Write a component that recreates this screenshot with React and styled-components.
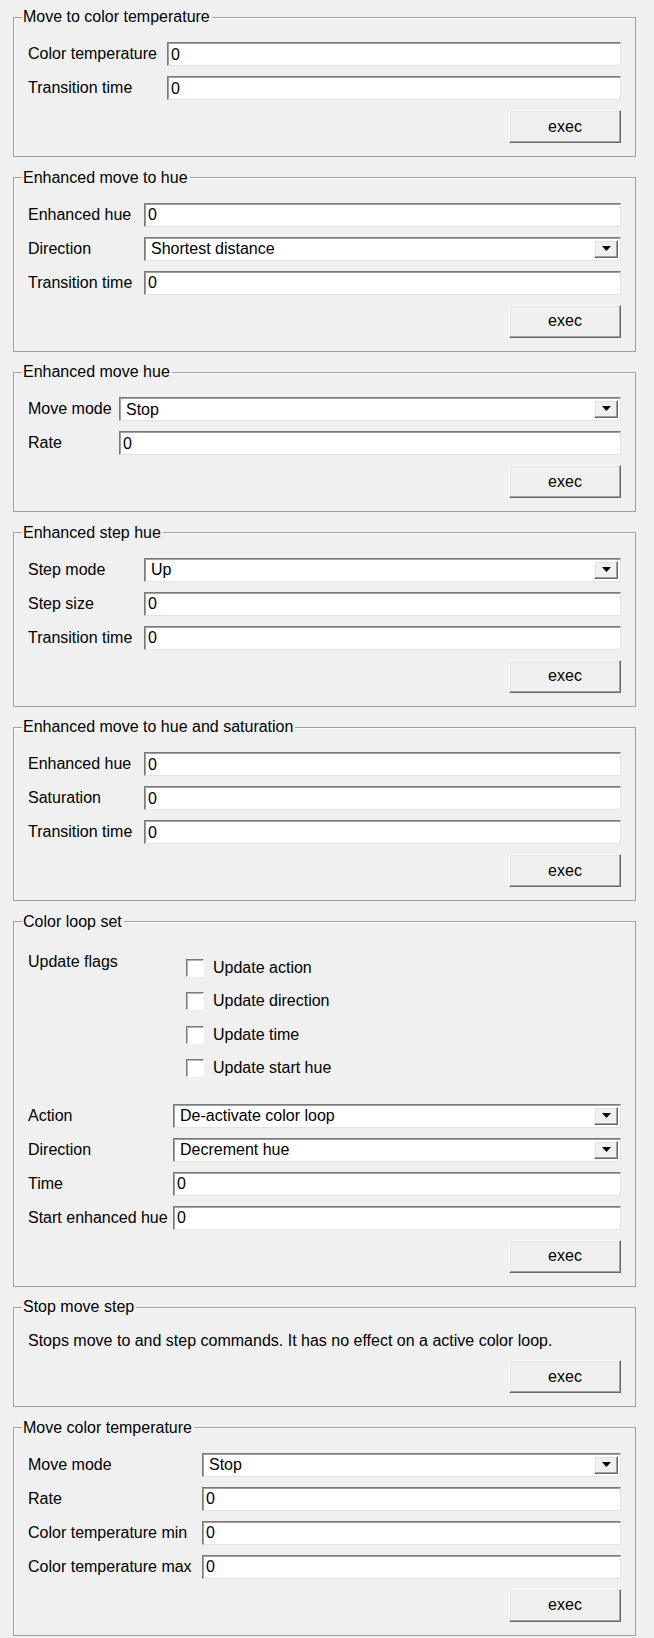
import React from 'react'
import styled, {createGlobalStyle} from 'styled-components'

const GlobalStyle = createGlobalStyle`
    html, body {
        margin: 0;
        padding: 0;
        background: #f0f0f0;
    }
    body {
        font-family: "Liberation Sans", Arial, sans-serif;
        font-size: 16px;
        color: #000;
    }
`

// labelWidth: width of the label column, so that the edit fields start where the dialog has them
const groups = [
    {
        title: 'Move to color temperature',
        labelWidth: 129,
        fields: [
            {label: 'Color temperature', value: '0'},
            {label: 'Transition time', value: '0'},
        ],
    },
    {
        title: 'Enhanced move to hue',
        labelWidth: 106,
        fields: [
            {label: 'Enhanced hue', value: '0'},
            {label: 'Direction', value: 'Shortest distance', select: true},
            {label: 'Transition time', value: '0'},
        ],
    },
    {
        title: 'Enhanced move hue',
        labelWidth: 81,
        fields: [
            {label: 'Move mode', value: 'Stop', select: true},
            {label: 'Rate', value: '0'},
        ],
    },
    {
        title: 'Enhanced step hue',
        labelWidth: 106,
        fields: [
            {label: 'Step mode', value: 'Up', select: true},
            {label: 'Step size', value: '0'},
            {label: 'Transition time', value: '0'},
        ],
    },
    {
        title: 'Enhanced move to hue and saturation',
        labelWidth: 106,
        fields: [
            {label: 'Enhanced hue', value: '0'},
            {label: 'Saturation', value: '0'},
            {label: 'Transition time', value: '0'},
        ],
    },
    {
        title: 'Color loop set',
        labelWidth: 135,
        flags: ['Update action', 'Update direction', 'Update time', 'Update start hue'],
        fields: [
            {label: 'Action', value: 'De-activate color loop', select: true},
            {label: 'Direction', value: 'Decrement hue', select: true},
            {label: 'Time', value: '0'},
            {label: 'Start enhanced hue', value: '0'},
        ],
    },
    {
        title: 'Stop move step',
        note: 'Stops move to and step commands. It has no effect on a active color loop.',
    },
    {
        title: 'Move color temperature',
        labelWidth: 164,
        fields: [
            {label: 'Move mode', value: 'Stop', select: true},
            {label: 'Rate', value: '0'},
            {label: 'Color temperature min', value: '0'},
            {label: 'Color temperature max', value: '0'},
        ],
    },
]

const Field = ({field}) => (
    <>
        <Label>{field.label}</Label>
        {field.select
            ? <Select>
                <SelectValue>{field.value}</SelectValue>
                <ArrowButton>
                    <svg width="9" height="5" viewBox="0 0 9 5">
                        <path d="M0 0h9L4.5 5z" fill="#000"/>
                    </svg>
                </ArrowButton>
            </Select>
            : <TextInput defaultValue={field.value}/>}
    </>
)

export default function App() {
    return (
        <>
            <GlobalStyle/>
            <Page>
                {groups.map(group =>
                    <Group key={group.title}>
                        <Title>{group.title}</Title>
                        {group.note && <Note>{group.note}</Note>}
                        {group.flags &&
                        <FlagsRow>
                            <FlagsLabel>Update flags</FlagsLabel>
                            <CheckList>
                                {group.flags.map(flag =>
                                    <CheckItem key={flag}>
                                        <CheckBox/>
                                        {flag}
                                    </CheckItem>
                                )}
                            </CheckList>
                        </FlagsRow>}
                        {group.fields &&
                        <FieldGrid $labelWidth={group.labelWidth}>
                            {group.fields.map(field => <Field key={field.label} field={field}/>)}
                        </FieldGrid>}
                        <ButtonRow>
                            <ExecButton>exec</ExecButton>
                        </ButtonRow>
                    </Group>
                )}
            </Page>
        </>
    )
}

const Page = styled.div`
    width: 623px;
    padding: 8px 18px 4px 13px;
    display: flex;
    flex-direction: column;
    gap: 11.5px;
`

const Group = styled.fieldset`
    margin: 0;
    min-width: 0;
    border: 1px solid #a0a0a0;
    box-shadow: inset 1px 1px 0 #fcfcfc;
    padding: 16px 14px 13px 14px;
    display: flex;
    flex-direction: column;
    gap: 10px;
`

const Title = styled.legend`
    margin-left: -6px;
    padding: 0 2px 0 1px;
    line-height: 18px;
    font-size: 16px;
`

const FieldGrid = styled.div`
    display: grid;
    grid-template-columns: ${p => p.$labelWidth}px 1fr;
    grid-auto-rows: 24px;
    column-gap: 10px;
    row-gap: 10px;
    align-items: center;
`

const Label = styled.span`
    white-space: nowrap;
    line-height: 18px;
`

const sunken = `
    box-sizing: border-box;
    height: 24px;
    background: #fff;
    border: 1px solid;
    border-color: #7a7a7a #e3e3e3 #e3e3e3 #7a7a7a;
    box-shadow: inset 1px 1px 0 #a0a0a0;
`

const TextInput = styled.input`
    ${sunken};
    width: 100%;
    margin: 0;
    padding: 1px 3px 0 3px;
    font-family: "Liberation Sans", Arial, sans-serif;
    font-size: 16px;
    color: #000;
    outline: none;
`

const Select = styled.div`
    ${sunken};
    display: flex;
    align-items: center;
    justify-content: space-between;
    padding: 2px 2px 2px 6px;
`

const SelectValue = styled.span`
    line-height: 18px;
    padding-top: 1px;
`

const raised = `
    box-sizing: border-box;
    background: #f0f0f0;
    border: 1px solid;
    border-color: #fff #696969 #696969 #fff;
    box-shadow: inset -1px -1px 0 #a0a0a0, inset 1px 1px 0 #e3e3e3;
`

const ArrowButton = styled.div`
    ${raised};
    width: 24px;
    height: 18px;
    display: flex;
    align-items: center;
    justify-content: center;
    padding-bottom: 1px;
`

const ButtonRow = styled.div`
    display: flex;
    justify-content: flex-end;
`

const ExecButton = styled.button`
    ${raised};
    width: 112px;
    height: 33px;
    margin: 0;
    padding: 0;
    font-family: "Liberation Sans", Arial, sans-serif;
    font-size: 16px;
    color: #000;
`

const Note = styled.div`
    line-height: 18px;
`

const FlagsRow = styled.div`
    display: grid;
    grid-template-columns: 158px 1fr;
    margin-bottom: 9px;
`

const FlagsLabel = styled.span`
    line-height: 18px;
    margin-top: 6px;
`

const CheckList = styled.div`
    display: flex;
    flex-direction: column;
    margin-top: 5px;
`

const CheckItem = styled.label`
    height: 33.3px;
    display: flex;
    align-items: center;
    gap: 9px;
    line-height: 18px;
`

const CheckBox = styled.span`
    box-sizing: border-box;
    width: 18px;
    height: 18px;
    background: #fff;
    border: 1px solid;
    border-color: #7a7a7a #f8f8f8 #f8f8f8 #7a7a7a;
    box-shadow: inset 1px 1px 0 #b4b4b4;
`
